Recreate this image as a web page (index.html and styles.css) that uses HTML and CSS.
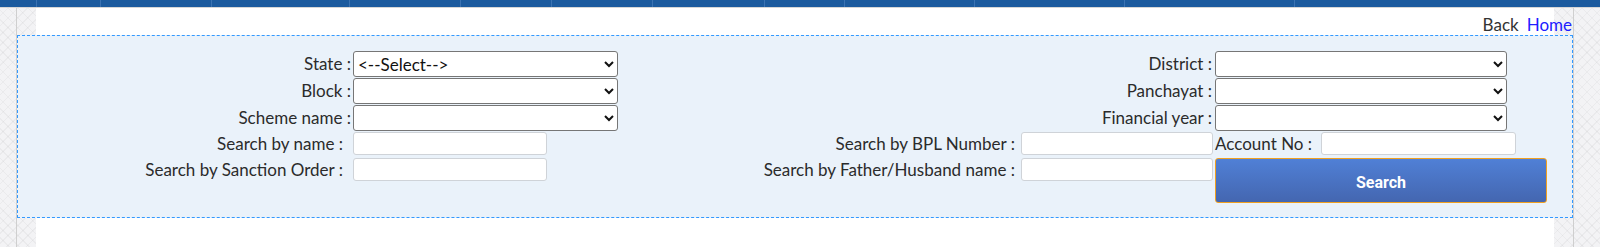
FILE: index.html
```html
<!DOCTYPE html>
<html lang="en">
<head>
  <meta charset="UTF-8">
  <meta name="viewport" content="width=device-width, initial-scale=1.0">
  <title>Beneficiary Search</title>
  <link rel="stylesheet" href="styles.css">
</head>
<body>

  <!-- thanh menu phía trên -->
  <ul class="menu">
    <li style="width:37px"></li>
    <li style="width:64px"></li>
    <li style="width:111px"></li>
    <li style="width:138px"></li>
    <li style="width:111px"></li>
    <li style="width:91px"></li>
    <li style="width:101px"></li>
    <li style="width:112px"></li>
    <li style="width:80px"></li>
    <li style="width:130px"></li>
    <li style="width:150px"></li>
    <li style="width:170px"></li>
  </ul>

  <div class="page">
    <div class="top-links">
      <a class="back" href="#">Back</a>
      <a class="home" href="#">Home</a>
    </div>

    <div class="search-box">
      <div class="form">
        <!-- hàng 1 -->
        <label class="lbl">State :</label>
        <select class="sel"><option>&lt;--Select--&gt;</option></select>
        <label class="lbl wide">District :</label>
        <select class="sel sel-right"><option></option></select>

        <!-- hàng 2 -->
        <label class="lbl">Block :</label>
        <select class="sel"><option></option></select>
        <label class="lbl wide">Panchayat :</label>
        <select class="sel sel-right"><option></option></select>

        <!-- hàng 3 -->
        <label class="lbl">Scheme name :</label>
        <select class="sel"><option></option></select>
        <label class="lbl wide">Financial year :</label>
        <select class="sel sel-right"><option></option></select>

        <!-- hàng 4 -->
        <label class="lbl txt">Search by name :</label>
        <input class="inp inp-name" type="text">
        <label class="lbl txt mid">Search by BPL Number :</label>
        <input class="inp inp-mid" type="text">
        <label class="lbl txt acc">Account No :</label>
        <input class="inp inp-acc" type="text">

        <!-- hàng 5 -->
        <label class="lbl txt">Search by Sanction Order :</label>
        <input class="inp inp-name" type="text">
        <label class="lbl txt mid">Search by Father/Husband name :</label>
        <input class="inp inp-mid" type="text">
        <button class="btn-search" type="button">Search</button>
      </div>
    </div>

    <div class="bottom"></div>
  </div>

</body>
</html>
```

FILE: styles.css
```css
body {
  margin: 0;
  font-family: Lato, "Open Sans", sans-serif;
  font-size: 17px;
  color: #2b2b2b;
  background-color: #f3f3f5;
  background-image:
    repeating-linear-gradient(45deg, rgba(0, 0, 0, 0.035) 0 1px, transparent 1px 7px),
    repeating-linear-gradient(-45deg, rgba(0, 0, 0, 0.035) 0 1px, transparent 1px 7px);
}

/* menu */
.menu {
  display: flex;
  margin: 0;
  padding: 0;
  list-style: none;
  height: 7px;
  background-color: #1b5a9e;
  border-bottom: 1px solid #d6d6d6;
}

.menu li {
  height: 7px;
  border-right: 1px solid #3a72b2;
  box-sizing: border-box;
}

.page {
  margin-left: 16px;
  width: 1556px;
  border-left: 1px solid #cfcfcf;
  border-right: 1px solid #cfcfcf;
}

.top-links {
  /* nền trắng chỉ ở giữa, hai bên để lộ hoa văn */
  background: linear-gradient(#fff, #fff) no-repeat 19px 0 / calc(100% - 38px) 100%;
  height: 27px;
  display: flex;
  justify-content: flex-end;
  align-items: flex-end;
  gap: 8px;
  padding-right: 1px;
  font-size: 17px;
}

.top-links a {
  text-decoration: none;
  line-height: 21px;
}

.back { color: #333333; }
.home { color: #2020ff; }

/* khung tìm kiếm */
.search-box {
  background-color: #eaf2fa;
  border: 1px dashed #3399ff;
  padding: 15px 0 14px 0;
}

.form {
  display: grid;
  grid-template-columns: 335px 265px 403px 192px 108px 195px 31px;
  grid-template-rows: 27px 27px 27px 26px auto;
  align-items: start;
}

.lbl {
  grid-column: 1;
  text-align: right;
  padding-right: 2px;
  height: 26px;
  line-height: 26px;
  white-space: nowrap;
}

.lbl.wide {
  grid-column: 3 / 5;
  padding-right: 1px;
}

.lbl.txt {
  height: 23px;
  line-height: 23px;
  padding-right: 10px;
}

.lbl.mid {
  grid-column: 3;
  padding-right: 6px;
}

.lbl.acc {
  grid-column: 5;
  text-align: left;
  padding-left: 2px;
  padding-right: 0;
}

.sel {
  grid-column: 2;
  width: 265px;
  height: 26px;
  margin: 0;
  font-family: Lato, "Open Sans", sans-serif;
  font-size: 17px;
  color: #111;
  background: #fff;
  border: 1px solid #767676;
  border-radius: 3px;
}

.sel-right {
  grid-column: 5 / 7;
  width: 292px;
  margin-left: 2px;
}

.inp {
  height: 23px;
  margin: 0;
  box-sizing: border-box;
  background: #fff;
  border: 1px solid #cfd3d8;
  border-radius: 3px;
}

.inp-name { grid-column: 2; width: 194px; }
.inp-mid { grid-column: 4; width: 192px; }
.inp-acc { grid-column: 6; width: 195px; }

.btn-search {
  grid-column: 5 / 8;
  margin-left: 2px;
  width: 332px;
  height: 45px;
  padding-top: 5px;
  border: 1px solid #f0a020;
  border-radius: 3px;
  background: linear-gradient(#5080d6, #4466b0);
  color: #fff;
  font-family: Roboto, "Liberation Sans", sans-serif;
  font-weight: bold;
  font-size: 16px;
  cursor: pointer;
}

.bottom {
  background: #fff;
  margin: 0 19px;
  height: 30px;
}
```
